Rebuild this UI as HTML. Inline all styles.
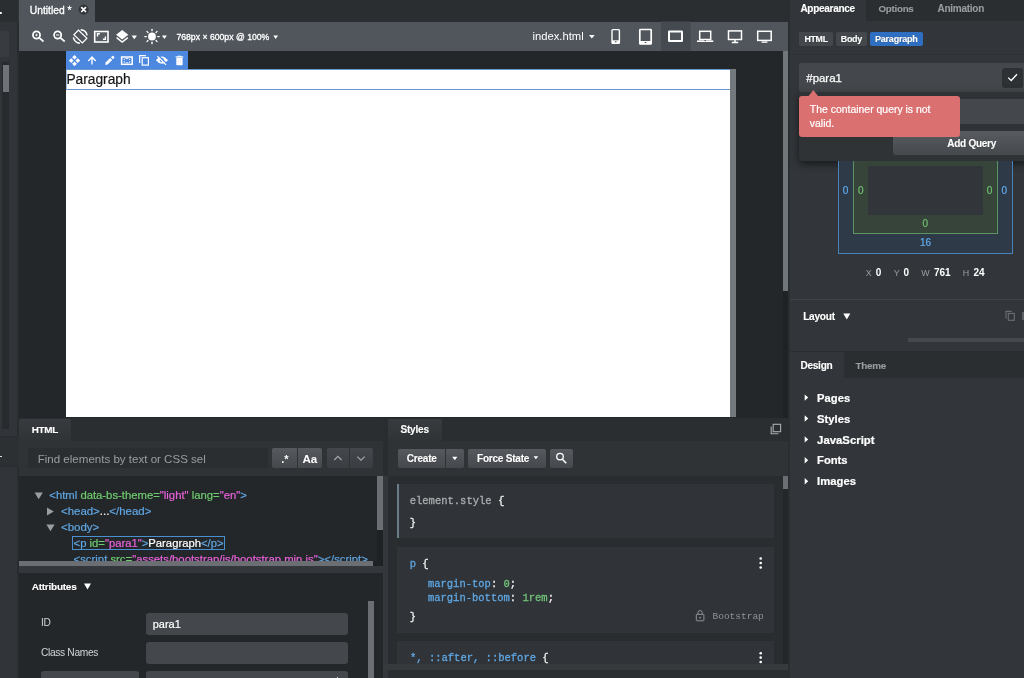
<!DOCTYPE html>
<html lang="en">
<head>
<meta charset="utf-8">
<title>Bootstrap Studio</title>
<style>
*{box-sizing:border-box;margin:0;padding:0}
html,body{width:1024px;height:678px;overflow:hidden;background:#34383c;font-family:"Liberation Sans",sans-serif;color:#fff}
#app{position:relative;width:1024px;height:678px;overflow:hidden;background:#34383c;will-change:transform}
.abs{position:absolute}
.t{position:absolute;white-space:pre;line-height:1}
svg{position:absolute;overflow:visible;pointer-events:none}
.btn{position:absolute;background:linear-gradient(#565a5e,#45494d);border-radius:2px}
.inp{position:absolute;background:#44484c;border-radius:3px}
</style>
</head>
<body>
<div id="app">
<!-- LEFT STRIP -->
<div class="abs" style="left:0.00px;top:0.00px;width:19.00px;height:678.00px;background:#313539;"></div>
<div class="abs" style="left:0.00px;top:0.00px;width:17.50px;height:21.50px;background:#2b2e31;"></div>
<div class="abs" style="left:16.80px;top:21.50px;width:2.20px;height:656.50px;background:#292c2f;"></div>
<div class="abs" style="left:0.00px;top:11.80px;width:1.60px;height:2.20px;background:#fff;border-radius:0 1px 1px 0"></div>
<div class="abs" style="left:0.00px;top:30.50px;width:8.50px;height:26.00px;background:#383c40;border-radius:0 2px 2px 0"></div>
<div class="abs" style="left:2.30px;top:62.00px;width:6.90px;height:367.00px;background:#282b2e;"></div>
<div class="abs" style="left:3.30px;top:65.30px;width:5.50px;height:26.70px;background:#6f7377;"></div>
<div class="abs" style="left:0.00px;top:436.00px;width:19.00px;height:2.00px;background:#2b2e31;"></div>
<div class="abs" style="left:0.00px;top:438.00px;width:19.00px;height:27.00px;background:#2d3033;"></div>
<div class="abs" style="left:0.00px;top:455.50px;width:1.50px;height:1.30px;background:#ddd;"></div>
<div class="abs" style="left:0.00px;top:465.00px;width:19.00px;height:1.50px;background:#2b2e31;"></div>
<!-- TOP BAR, DOC TAB, TOOLBAR, CANVAS -->
<div class="abs" style="left:19.00px;top:0.00px;width:771.00px;height:21.50px;background:#2b2e31;"></div>
<div class="abs" style="left:19.00px;top:0.00px;width:76.00px;height:22.00px;background:#50565c;"></div>
<div class="abs" style="left:19.00px;top:21.50px;width:769.20px;height:29.60px;background:#50565c;"></div>
<div class="abs" style="left:788.20px;top:0.00px;width:1.80px;height:678.00px;background:#2b2e31;"></div>
<div class="abs" style="left:19.00px;top:51.10px;width:764.00px;height:367.40px;background:#24272a;"></div>
<div class="abs" style="left:782.80px;top:51.10px;width:5.40px;height:240.00px;background:#70767a;"></div>
<div class="abs" style="left:782.80px;top:291.00px;width:5.40px;height:127.50px;background:#1f2224;"></div>
<div class="abs" style="left:66.00px;top:69.00px;width:664.00px;height:348.30px;background:#fff;"></div>
<div class="abs" style="left:730.00px;top:69.00px;width:6.00px;height:348.30px;background:#74797d;"></div>
<div class="t" style="left:29.80px;top:6px;font-size:10.30px;color:#fff;-webkit-text-stroke:.3px #fff;">Untitled *</div>
<svg style="left:77.50px;top:4.20px;" width="11.2" height="11.2" viewBox="0 0 11.2 11.2"><circle cx="5.6" cy="5.6" r="5.1" fill="#33373b"/><path d="M3.7 3.7L7.5 7.5M7.5 3.7L3.7 7.5" stroke="#fff" stroke-width="1.7" stroke-linecap="round"/></svg>
<svg style="left:0;top:0" width="1024" height="678"><circle cx="36.5" cy="35" r="3.55" fill="none" stroke="#fff" stroke-width="1.75"/><path d="M39.3 37.9L43.5 41.5" stroke="#fff" stroke-width="1.7"/><path d="M35.2 35H37.8M36.5 33.7V36.3" stroke="#e4e5e6" stroke-width="1.1"/><circle cx="57.65" cy="35" r="3.55" fill="none" stroke="#fff" stroke-width="1.75"/><path d="M60.45 37.9L64.7 41.5" stroke="#fff" stroke-width="1.7"/><path d="M56 35H59.3" stroke="#dcdddf" stroke-width="1.3"/><g transform="translate(80.4 36.5) rotate(44)"><rect x="-5.85" y="-3.27" width="11.7" height="6.54" fill="none" stroke="#fff" stroke-width="1.2"/></g><path d="M80.6 29.7A6.9 6.9 0 0 1 87.1 35.3" fill="none" stroke="#fff" stroke-width="1.5"/><path d="M79.9 43.3A6.9 6.9 0 0 1 73.4 37.4" fill="none" stroke="#fff" stroke-width="1.5"/><rect x="94.7" y="31.5" width="13.3" height="10.5" fill="#575d62" stroke="#fff" stroke-width="1.6"/><path d="M97.5 36.5V33.8H99.9" fill="none" stroke="#fff" stroke-width="1.4"/><path d="M105.4 36.6V39.3H102.9" fill="none" stroke="#fff" stroke-width="1.4"/><path d="M122.2 29.9L128.3 34.8L122.2 39.5L116.1 34.8Z" fill="#fff"/><path d="M116.6 37.6L122.2 42L127.8 37.6" fill="none" stroke="#fff" stroke-width="1.4"/><path d="M131.6 35.5H137L134.3 39.2Z" fill="#fff"/><circle cx="152" cy="36.5" r="3.9" fill="#fff"/><path d="M157.70 36.50L159.20 36.50" stroke="#fff" stroke-width="1.25" stroke-linecap="round"/><path d="M156.03 40.53L157.09 41.59" stroke="#fff" stroke-width="1.25" stroke-linecap="round"/><path d="M152.00 42.20L152.00 43.70" stroke="#fff" stroke-width="1.25" stroke-linecap="round"/><path d="M147.97 40.53L146.91 41.59" stroke="#fff" stroke-width="1.25" stroke-linecap="round"/><path d="M146.30 36.50L144.80 36.50" stroke="#fff" stroke-width="1.25" stroke-linecap="round"/><path d="M147.97 32.47L146.91 31.41" stroke="#fff" stroke-width="1.25" stroke-linecap="round"/><path d="M152.00 30.80L152.00 29.30" stroke="#fff" stroke-width="1.25" stroke-linecap="round"/><path d="M156.03 32.47L157.09 31.41" stroke="#fff" stroke-width="1.25" stroke-linecap="round"/><path d="M161.9 35.6H166.9L164.4 39Z" fill="#fff"/><path d="M273.3 35.6H278.1L275.7 39Z" fill="#fff"/><path d="M589 34.9H594.7L591.85 38.5Z" fill="#fff"/><rect x="612" y="29.6" width="7.4" height="13.7" rx="0.8" fill="none" stroke="#fff" stroke-width="1.4"/><rect x="612" y="40.3" width="7.4" height="3" fill="#fff"/><rect x="614.9" y="41.2" width="1.6" height="1.1" fill="#50565c"/><rect x="639.8" y="29.5" width="11.4" height="14.5" rx="0.6" fill="none" stroke="#fff" stroke-width="1.7"/><rect x="639.7" y="41" width="11.6" height="3.1" fill="#fff"/><rect x="644.7" y="41.9" width="1.6" height="1.1" fill="#50565c"/><rect x="661" y="21.5" width="29.6" height="29.6" fill="#444a4f"/><rect x="669" y="31.6" width="13" height="9.4" rx="0.3" fill="#50565c" stroke="#fff" stroke-width="2"/><rect x="699.7" y="31.3" width="11" height="8.2" fill="none" stroke="#fff" stroke-width="1.5"/><path d="M697 41.2H713.3" stroke="#fff" stroke-width="1.6"/><rect x="704.4" y="40.1" width="1.6" height="1" fill="#50565c"/><rect x="728.5" y="30.9" width="13" height="8.6" fill="none" stroke="#fff" stroke-width="1.5"/><path d="M735 40V42M731.8 42.4H738.2" stroke="#fff" stroke-width="1.5"/><rect x="757.7" y="31.3" width="13.5" height="9.1" fill="none" stroke="#fff" stroke-width="1.5"/><path d="M761.6 42.1H767.4" stroke="#fff" stroke-width="1.4"/></svg>
<div class="t" style="left:176.40px;top:33px;font-size:8.69px;color:#fff;-webkit-text-stroke:.3px #fff;">768px × 600px @ 100%</div>
<div class="t" style="left:532.50px;top:31px;font-size:11.24px;color:#fff;">index.html</div>
<div class="abs" style="left:66.00px;top:51.30px;width:122.00px;height:18.10px;background:#4d88e0;"></div>
<div class="abs" style="left:66.00px;top:69.00px;width:664.00px;height:20.50px;background:transparent;border:1px solid #6a97cf;border-right:none;border-left-color:#a9c3e6;"></div>
<div class="t" style="left:66.40px;top:73px;font-size:13.77px;color:#15181b;-webkit-text-stroke:.2px #15181b;">Paragraph</div>
<svg style="left:0;top:0" width="1024" height="678"><path d="M74.50 54.90L76.85 57.25L74.50 59.60L72.15 57.25ZM74.50 61.50L76.85 63.85L74.50 66.20L72.15 63.85ZM71.20 58.20L73.55 60.55L71.20 62.90L68.85 60.55ZM77.80 58.20L80.15 60.55L77.80 62.90L75.45 60.55Z" fill="#fff"/><path d="M92 64.6V57.4M88.3 60.9L92 57.1L95.7 60.9" fill="none" stroke="#fff" stroke-width="1.4"/><path d="M105.2 65L105.6 62.6L110.2 58.1L112.2 60.1L107.6 64.6Z" fill="#fff"/><path d="M111 57.3L112.2 56.1Q112.9 55.6 113.5 56.2L114.1 56.8Q114.7 57.5 114.2 58.1L113 59.3Z" fill="#fff"/><rect x="121.6" y="57" width="10.6" height="7.3" fill="none" stroke="#fff" stroke-width="1.5"/><path d="M124.3 58.7v1.4M124.3 61.3v1.4M129.6 58.7v1.4M129.6 61.3v1.4M125.6 58.6h2.8M125.6 62.8h2.8" stroke="#fff" stroke-width="0.9"/><rect x="142.2" y="57.7" width="6.2" height="7.4" fill="none" stroke="#fff" stroke-width="1.2"/><path d="M139.7 63V55.6H146" fill="none" stroke="#fff" stroke-width="1.2"/><path d="M155.9 60.2Q161.9 52.6 168 60.2Q161.9 67.4 155.9 60.2Z" fill="#fff"/><circle cx="161.9" cy="60.2" r="2.1" fill="#4d88e0"/><circle cx="161.9" cy="60.2" r="0.9" fill="#fff"/><path d="M158.4 55.4L167.2 64.2" stroke="#4d88e0" stroke-width="1.3"/><path d="M157.3 56.2L166 64.9" stroke="#fff" stroke-width="1.2"/><rect x="176.3" y="57.9" width="6.3" height="7.4" rx="0.7" fill="#fff"/><rect x="175.6" y="56.3" width="7.6" height="1.3" fill="#fff"/><rect x="177.9" y="55.7" width="3" height="1" fill="#fff"/><path d="M178.3 59.3V63.8M180.6 59.3V63.8" stroke="#e8e0f0" stroke-width="0.5"/></svg>
<!-- BOTTOM: HTML PANEL -->
<div class="abs" style="left:19.00px;top:418.40px;width:769.20px;height:57.60px;background:#2f3336;"></div>
<div class="abs" style="left:383.00px;top:418.40px;width:5.00px;height:57.60px;background:#2a2d30;"></div>
<div class="abs" style="left:19.00px;top:418.40px;width:364.00px;height:22.80px;background:#2b2e31;"></div>
<div class="abs" style="left:19.00px;top:418.80px;width:52.40px;height:22.40px;background:linear-gradient(#383c40,#2f3336);border-radius:2px 2px 0 0"></div>
<div class="t" style="left:31.80px;top:425px;font-size:9.91px;color:#fff;font-weight:bold;letter-spacing:-0.328px;-webkit-text-stroke:.15px currentColor;text-shadow:0 0 1px rgba(0,0,0,.5);">HTML</div>
<div class="abs" style="left:28.00px;top:448.20px;width:239.60px;height:19.80px;background:#2b2e31;border-radius:2px"></div>
<div class="t" style="left:37.70px;top:454px;font-size:11.56px;color:#9b9ea1;">Find elements by text or CSS sel</div>
<div class="abs" style="left:271.60px;top:448.30px;width:25.60px;height:19.60px;background:linear-gradient(#565a5e,#45494d);border-radius:2px 0 0 2px"></div>
<div class="abs" style="left:297.70px;top:448.30px;width:24.30px;height:19.60px;background:linear-gradient(#565a5e,#45494d);border-radius:0 2px 2px 0"></div>
<div class="abs" style="left:326.50px;top:448.30px;width:22.60px;height:19.60px;background:linear-gradient(#44484c,#3a3e42);border-radius:2px 0 0 2px"></div>
<div class="abs" style="left:349.60px;top:448.30px;width:23.00px;height:19.60px;background:linear-gradient(#44484c,#3a3e42);border-radius:0 2px 2px 0"></div>
<div class="t" style="left:281.20px;top:454px;font-size:11.00px;color:#fff;font-weight:bold;">.*</div>
<div class="t" style="left:302.40px;top:454px;font-size:11.58px;color:#fff;font-weight:bold;">Aa</div>
<svg style="left:0;top:0" width="1024" height="678"><path d="M334.2 460L337.9 456.4L341.6 460" fill="none" stroke="#a4a7aa" stroke-width="1.2"/><path d="M357.3 456.6L361 460.2L364.7 456.6" fill="none" stroke="#a4a7aa" stroke-width="1.2"/></svg>
<div class="abs" style="left:19.00px;top:476.00px;width:364.00px;height:90.00px;background:#24272a;"></div>
<svg style="left:0;top:0" width="1024" height="678"><path d="M34.60 492.40L42.80 492.40L38.70 499.20Z" fill="#9b9ea1"/></svg>
<div class="t" style="left:49.30px;top:490px;font-size:11.30px;color:#fff;-webkit-text-stroke:.2px currentColor;"><span style="color:#5fa6e2">&lt;html </span><span style="color:#70cc70">data-bs-theme=</span><span style="color:#ea62dc">"light"</span><span style="color:#70cc70"> lang=</span><span style="color:#ea62dc">"en"</span><span style="color:#5fa6e2">&gt;</span></div>
<svg style="left:0;top:0" width="1024" height="678"><path d="M47.00 507.60L53.80 511.60L47.00 515.60Z" fill="#9b9ea1"/></svg>
<div class="t" style="left:61.00px;top:506px;font-size:11.45px;color:#fff;-webkit-text-stroke:.2px currentColor;"><span style="color:#5fa6e2">&lt;head&gt;</span><span style="color:#f0f0f0">...</span><span style="color:#5fa6e2">&lt;/head&gt;</span></div>
<svg style="left:0;top:0" width="1024" height="678"><path d="M46.40 524.40L54.60 524.40L50.50 531.20Z" fill="#9b9ea1"/></svg>
<div class="t" style="left:61.00px;top:522px;font-size:11.45px;color:#fff;-webkit-text-stroke:.2px currentColor;"><span style="color:#5fa6e2">&lt;body&gt;</span></div>
<div class="abs" style="left:72.00px;top:536.40px;width:153.00px;height:13.80px;background:transparent;border:1px solid #4a8fd0;"></div>
<div class="t" style="left:73.60px;top:538px;font-size:11.28px;color:#fff;-webkit-text-stroke:.2px currentColor;"><span style="color:#5fa6e2">&lt;p </span><span style="color:#70cc70">id=</span><span style="color:#ea62dc">"para1"</span><span style="color:#5fa6e2">&gt;</span><span style="color:#fff">Paragraph</span><span style="color:#5fa6e2">&lt;/p&gt;</span></div>
<div class="t" style="left:73.60px;top:554px;font-size:11.34px;color:#fff;-webkit-text-stroke:.2px currentColor;"><span style="color:#5fa6e2">&lt;script </span><span style="color:#70cc70">src=</span><span style="color:#ea62dc">"assets/bootstrap/js/bootstrap.min.js"</span><span style="color:#5fa6e2">&gt;&lt;/script&gt;</span></div>
<div class="abs" style="left:19.00px;top:561.00px;width:354.00px;height:5.20px;background:#6b6f73;"></div>
<div class="abs" style="left:373.00px;top:561.00px;width:10.00px;height:5.20px;background:#1f2224;"></div>
<div class="abs" style="left:376.80px;top:476.00px;width:5.80px;height:85.00px;background:#1f2224;"></div>
<div class="abs" style="left:376.80px;top:476.00px;width:5.80px;height:53.80px;background:#6b6f73;"></div>
<!-- ATTRIBUTES PANEL -->
<div class="abs" style="left:19.00px;top:573.00px;width:364.00px;height:105.00px;background:#24272a;"></div>
<div class="t" style="left:31.70px;top:582px;font-size:9.98px;color:#fff;font-weight:bold;letter-spacing:-0.225px;-webkit-text-stroke:.15px currentColor;text-shadow:0 0 1px rgba(0,0,0,.5);">Attributes</div>
<svg style="left:0;top:0" width="1024" height="678"><path d="M84.00 583.50L91.00 583.50L87.50 589.50Z" fill="#fff"/></svg>
<div class="t" style="left:41.00px;top:618px;font-size:10.20px;color:#d2d4d6;letter-spacing:-0.450px;">ID</div>
<div class="t" style="left:41.00px;top:648px;font-size:10.20px;color:#d2d4d6;letter-spacing:-0.323px;">Class Names</div>
<div class="abs" style="left:146.00px;top:613.30px;width:202.00px;height:21.60px;background:#44484c;border-radius:3px"></div>
<div class="abs" style="left:146.00px;top:642.00px;width:202.00px;height:21.60px;background:#44484c;border-radius:3px"></div>
<div class="abs" style="left:41.00px;top:671.40px;width:97.50px;height:12.00px;background:#44484c;border-radius:3px"></div>
<div class="abs" style="left:146.00px;top:671.40px;width:202.00px;height:12.00px;background:#44484c;border-radius:3px"></div>
<div class="t" style="left:152.80px;top:619px;font-size:10.91px;color:#fff;-webkit-text-stroke:.2px #fff;">para1</div>
<div class="abs" style="left:368.40px;top:600.70px;width:5.40px;height:80.00px;background:#6b6f73;"></div>
<div class="abs" style="left:337.20px;top:676.60px;width:1.00px;height:1.40px;background:#ddd;"></div>
<!-- STYLES PANEL -->
<div class="abs" style="left:388.00px;top:418.40px;width:400.20px;height:22.80px;background:#2b2e31;"></div>
<div class="abs" style="left:388.00px;top:418.80px;width:54.10px;height:22.40px;background:linear-gradient(#383c40,#2f3336);border-radius:2px 2px 0 0"></div>
<div class="t" style="left:400.50px;top:425px;font-size:10.09px;color:#fff;font-weight:bold;letter-spacing:-0.236px;-webkit-text-stroke:.15px currentColor;text-shadow:0 0 1px rgba(0,0,0,.5);">Styles</div>
<svg style="left:0;top:0" width="1024" height="678"><rect x="773.2" y="424.3" width="7.4" height="7.4" fill="none" stroke="#a9acaf" stroke-width="1.1"/><path d="M771.2 426.6V433.8H778.4" fill="none" stroke="#a9acaf" stroke-width="1.1"/></svg>
<div class="abs" style="left:398.00px;top:448.50px;width:47.00px;height:19.50px;background:linear-gradient(#565a5e,#45494d);border-radius:2px 0 0 2px"></div>
<div class="abs" style="left:445.60px;top:448.50px;width:18.40px;height:19.50px;background:linear-gradient(#565a5e,#45494d);border-radius:0 2px 2px 0"></div>
<div class="abs" style="left:467.90px;top:448.50px;width:77.70px;height:19.50px;background:linear-gradient(#565a5e,#45494d);border-radius:2px"></div>
<div class="abs" style="left:550.00px;top:448.50px;width:23.00px;height:19.50px;background:linear-gradient(#565a5e,#45494d);border-radius:2px"></div>
<div class="t" style="left:406.80px;top:454px;font-size:10.05px;color:#fff;font-weight:bold;letter-spacing:-0.248px;-webkit-text-stroke:.15px currentColor;text-shadow:0 0 1px rgba(0,0,0,.5);">Create</div>
<div class="t" style="left:477.00px;top:454px;font-size:10.06px;color:#fff;font-weight:bold;letter-spacing:-0.237px;-webkit-text-stroke:.15px currentColor;text-shadow:0 0 1px rgba(0,0,0,.5);">Force State</div>
<svg style="left:0;top:0" width="1024" height="678"><path d="M452.2 456.8H457.4L454.8 460.2Z" fill="#fff"/><path d="M533.6 456.3H538.2L535.9 459.3Z" fill="#fff"/><circle cx="560" cy="456.6" r="3.3" fill="none" stroke="#fff" stroke-width="1.3"/><path d="M562.4 459.2L566.2 463.2" stroke="#fff" stroke-width="1.5"/></svg>
<div class="abs" style="left:388.00px;top:476.00px;width:395.00px;height:188.00px;background:#2a2d30;"></div>
<div class="abs" style="left:783.00px;top:476.00px;width:5.20px;height:188.00px;background:#24272a;"></div>
<div class="abs" style="left:783.00px;top:475.70px;width:5.20px;height:13.80px;background:#6b6f73;"></div>
<div class="abs" style="left:397.20px;top:483.80px;width:377.00px;height:54.30px;background:#303337;border-left:2px solid #6c7d8a;"></div>
<div class="abs" style="left:397.20px;top:546.60px;width:377.00px;height:86.00px;background:#303337;"></div>
<div class="abs" style="left:397.20px;top:641.20px;width:377.00px;height:22.80px;background:#303337;"></div>
<div class="t" style="left:409.70px;top:496px;font-size:10.50px;color:#fff;font-family:'Liberation Mono',monospace;-webkit-text-stroke:.3px currentColor;"><span style="color:#a9acaf">element.style </span><span style="color:#eeeeee">{</span></div>
<div class="t" style="left:409.70px;top:518px;font-size:10.50px;color:#fff;font-family:'Liberation Mono',monospace;-webkit-text-stroke:.3px currentColor;"><span style="color:#eeeeee">}</span></div>
<div class="t" style="left:409.70px;top:559px;font-size:10.50px;color:#fff;font-family:'Liberation Mono',monospace;-webkit-text-stroke:.3px currentColor;"><span style="color:#5fa6e2">p </span><span style="color:#eeeeee">{</span></div>
<div class="t" style="left:427.90px;top:579px;font-size:10.50px;color:#fff;font-family:'Liberation Mono',monospace;-webkit-text-stroke:.3px currentColor;"><span style="color:#5fa6e2">margin-top</span><span style="color:#eeeeee">: </span><span style="color:#72c47a">0</span><span style="color:#eeeeee">;</span></div>
<div class="t" style="left:427.90px;top:593px;font-size:10.50px;color:#fff;font-family:'Liberation Mono',monospace;-webkit-text-stroke:.3px currentColor;"><span style="color:#5fa6e2">margin-bottom</span><span style="color:#eeeeee">: </span><span style="color:#72c47a">1rem</span><span style="color:#eeeeee">;</span></div>
<div class="t" style="left:409.70px;top:612px;font-size:10.50px;color:#fff;font-family:'Liberation Mono',monospace;-webkit-text-stroke:.3px currentColor;"><span style="color:#eeeeee">}</span></div>
<div class="t" style="left:410.00px;top:653px;font-size:10.50px;color:#fff;font-family:'Liberation Mono',monospace;-webkit-text-stroke:.3px currentColor;"><span style="color:#5fa6e2">*, ::after, ::before </span><span style="color:#eeeeee">{</span></div>
<div class="t" style="left:712.50px;top:612px;font-size:9.50px;color:#8f9295;font-family:'Liberation Mono',monospace;">Bootstrap</div>
<svg style="left:0;top:0" width="1024" height="678"><circle cx="760.7" cy="558.5" r="1.3" fill="#fff"/><circle cx="760.7" cy="563" r="1.3" fill="#fff"/><circle cx="760.7" cy="567.5" r="1.3" fill="#fff"/><circle cx="760.7" cy="653.2" r="1.3" fill="#fff"/><circle cx="760.7" cy="657.6" r="1.3" fill="#fff"/><circle cx="760.7" cy="662" r="1.3" fill="#fff"/><rect x="696.3" y="614.3" width="7.6" height="6.5" rx="0.6" fill="none" stroke="#8f9295" stroke-width="1"/><path d="M698 614.2V612.6A2.1 2.1 0 0 1 702.2 612.6V614.2" fill="none" stroke="#8f9295" stroke-width="1"/><rect x="699.4" y="616.9" width="1.5" height="1.5" fill="#8f9295"/></svg>
<div class="abs" style="left:383.00px;top:664.00px;width:405.20px;height:6.40px;background:#363a3d;"></div>
<div class="abs" style="left:388.00px;top:670.40px;width:400.20px;height:8.00px;background:#2b2e31;"></div>
<!-- RIGHT PANEL -->
<div class="abs" style="left:790.00px;top:0.00px;width:234.00px;height:678.00px;background:#32363a;"></div>
<div class="abs" style="left:790.00px;top:0.00px;width:234.00px;height:21.30px;background:#2b2e31;"></div>
<div class="abs" style="left:790.00px;top:0.00px;width:76.40px;height:21.60px;background:#32363a;"></div>
<div class="t" style="left:800.40px;top:4px;font-size:10.01px;color:#fff;font-weight:bold;letter-spacing:-0.273px;-webkit-text-stroke:.15px currentColor;text-shadow:0 0 1px rgba(0,0,0,.5);">Appearance</div>
<div class="t" style="left:878.40px;top:4px;font-size:9.78px;color:#9b9ea1;font-weight:bold;letter-spacing:-0.251px;-webkit-text-stroke:.15px currentColor;text-shadow:0 0 1px rgba(0,0,0,.5);">Options</div>
<div class="t" style="left:937.50px;top:4px;font-size:9.99px;color:#9b9ea1;font-weight:bold;letter-spacing:-0.258px;-webkit-text-stroke:.15px currentColor;text-shadow:0 0 1px rgba(0,0,0,.5);">Animation</div>
<div class="abs" style="left:799.20px;top:32.10px;width:34.00px;height:13.80px;background:#44484c;border-radius:1.5px"></div>
<div class="abs" style="left:836.00px;top:32.10px;width:31.20px;height:13.80px;background:#44484c;border-radius:2px"></div>
<div class="abs" style="left:869.50px;top:32.10px;width:53.20px;height:13.80px;background:#2e6fc2;border-radius:2px"></div>
<div class="t" style="left:804.40px;top:35px;font-size:8.85px;color:#fff;font-weight:bold;letter-spacing:-0.293px;-webkit-text-stroke:.15px currentColor;text-shadow:0 0 1px rgba(0,0,0,.5);">HTML</div>
<div class="t" style="left:840.70px;top:35px;font-size:8.95px;color:#fff;font-weight:bold;letter-spacing:-0.266px;-webkit-text-stroke:.15px currentColor;text-shadow:0 0 1px rgba(0,0,0,.5);">Body</div>
<div class="t" style="left:875.00px;top:35px;font-size:9.04px;color:#fff;font-weight:bold;letter-spacing:-0.237px;-webkit-text-stroke:.15px currentColor;text-shadow:0 0 1px rgba(0,0,0,.5);">Paragraph</div>
<div class="abs" style="left:790.00px;top:54.30px;width:234.00px;height:0.80px;background:#2e3134;"></div>
<div class="abs" style="left:799.20px;top:63.30px;width:230.00px;height:28.50px;background:#44484c;border-radius:3px"></div>
<div class="t" style="left:806.30px;top:73px;font-size:11.43px;color:#fff;-webkit-text-stroke:.25px #fff;">#para1</div>
<div class="abs" style="left:1001.50px;top:68.00px;width:21.30px;height:20.00px;background:#2e3134;border-radius:3px"></div>
<svg style="left:0;top:0" width="1024" height="678"><path d="M1008.2 77.6L1011.2 80.5L1017 74.2" fill="none" stroke="#fff" stroke-width="1.3"/></svg>
<div class="abs" style="left:799.20px;top:91.80px;width:230.00px;height:69.40px;background:#303336;border-radius:0 0 0 4px;box-shadow:0 3px 9px rgba(0,0,0,.55)"></div>
<div class="abs" style="left:940.00px;top:99.20px;width:90.00px;height:25.30px;background:#44484c;border-radius:3px"></div>
<div class="abs" style="left:893.00px;top:131.00px;width:136.00px;height:24.00px;background:linear-gradient(#585c60,#45494d);border-radius:3px"></div>
<div class="t" style="left:947.30px;top:139px;font-size:10.00px;color:#fff;font-weight:bold;letter-spacing:-0.271px;-webkit-text-stroke:.15px currentColor;text-shadow:0 0 1px rgba(0,0,0,.5);">Add Query</div>
<div class="abs" style="left:799.00px;top:95.50px;width:161.20px;height:41.50px;background:#db7070;border-radius:3px"></div>
<svg style="left:0;top:0" width="1024" height="678"><path d="M808.6 96L813.3 90L818 96Z" fill="#db7070"/></svg>
<div class="t" style="left:809.80px;top:105px;font-size:10.44px;color:#fff;-webkit-text-stroke:.2px #fff;">The container query is not</div>
<div class="t" style="left:809.80px;top:119px;font-size:10.44px;color:#fff;-webkit-text-stroke:.2px #fff;">valid.</div>
<div class="abs" style="left:837.90px;top:161.20px;width:175.10px;height:92.40px;background:#2e3a48;border:1px solid #4a80b8;border-top:none"></div>
<div class="abs" style="left:852.70px;top:161.20px;width:145.00px;height:73.20px;background:#36443a;border:1px solid #5a9462;border-top:none"></div>
<div class="abs" style="left:868.40px;top:166.20px;width:114.80px;height:48.70px;background:#32363a;"></div>
<div class="t" style="left:825.60px;top:186px;width:40px;text-align:center;font-size:10.00px;color:#62aaee;-webkit-text-stroke:.2px #62aaee;">0</div>
<div class="t" style="left:840.90px;top:186px;width:40px;text-align:center;font-size:10.00px;color:#72c272;-webkit-text-stroke:.2px #72c272;">0</div>
<div class="t" style="left:969.50px;top:186px;width:40px;text-align:center;font-size:10.00px;color:#72c272;-webkit-text-stroke:.2px #72c272;">0</div>
<div class="t" style="left:984.30px;top:186px;width:40px;text-align:center;font-size:10.00px;color:#62aaee;-webkit-text-stroke:.2px #62aaee;">0</div>
<div class="t" style="left:905.30px;top:219px;width:40px;text-align:center;font-size:10.00px;color:#72c272;-webkit-text-stroke:.2px #72c272;">0</div>
<div class="t" style="left:905.60px;top:238px;width:40px;text-align:center;font-size:10.00px;color:#62aaee;-webkit-text-stroke:.2px #62aaee;">16</div>
<div class="t" style="left:865.80px;top:269px;font-size:8.90px;color:#9b9ea1;">X</div>
<div class="t" style="left:875.70px;top:268px;font-size:10.00px;color:#fff;font-weight:bold;">0</div>
<div class="t" style="left:893.80px;top:269px;font-size:8.90px;color:#9b9ea1;">Y</div>
<div class="t" style="left:903.40px;top:268px;font-size:10.00px;color:#fff;font-weight:bold;">0</div>
<div class="t" style="left:921.20px;top:269px;font-size:8.90px;color:#9b9ea1;">W</div>
<div class="t" style="left:934.00px;top:268px;font-size:10.00px;color:#fff;font-weight:bold;">761</div>
<div class="t" style="left:962.80px;top:269px;font-size:8.90px;color:#9b9ea1;">H</div>
<div class="t" style="left:973.50px;top:268px;font-size:10.00px;color:#fff;font-weight:bold;">24</div>
<div class="abs" style="left:790.00px;top:299.00px;width:234.00px;height:1.00px;background:#3e4246;"></div>
<div class="t" style="left:803.20px;top:312px;font-size:10.15px;color:#fff;font-weight:bold;letter-spacing:-0.264px;-webkit-text-stroke:.15px currentColor;text-shadow:0 0 1px rgba(0,0,0,.5);">Layout</div>
<svg style="left:0;top:0" width="1024" height="678"><path d="M843.30 313.60L850.30 313.60L846.80 319.60Z" fill="#fff"/></svg>
<svg style="left:0;top:0" width="1024" height="678"><rect x="1008.3" y="313.4" width="6" height="6.9" fill="none" stroke="#6b6f73" stroke-width="1.1"/><path d="M1006 318.4V311.4H1011.6" fill="none" stroke="#6b6f73" stroke-width="1.1"/><rect x="1021.9" y="312" width="4" height="8" fill="#5d6165"/></svg>
<div class="abs" style="left:908.20px;top:338.30px;width:120.00px;height:4.20px;background:#45494d;"></div>
<div class="abs" style="left:790.00px;top:351.40px;width:234.00px;height:26.20px;background:#2b2e31;"></div>
<div class="abs" style="left:790.00px;top:352.00px;width:53.80px;height:25.60px;background:#32363a;"></div>
<div class="t" style="left:800.40px;top:361px;font-size:10.11px;color:#fff;font-weight:bold;letter-spacing:-0.268px;-webkit-text-stroke:.15px currentColor;text-shadow:0 0 1px rgba(0,0,0,.5);">Design</div>
<div class="t" style="left:855.50px;top:361px;font-size:9.94px;color:#9b9ea1;font-weight:bold;letter-spacing:-0.305px;-webkit-text-stroke:.15px currentColor;text-shadow:0 0 1px rgba(0,0,0,.5);">Theme</div>
<svg style="left:0;top:0" width="1024" height="678"><path d="M804.70 394.40L808.20 397.60L804.70 400.80Z" fill="#fff"/></svg>
<div class="t" style="left:817.10px;top:393px;font-size:11.23px;color:#fff;font-weight:bold;-webkit-text-stroke:.2px #fff;">Pages</div>
<svg style="left:0;top:0" width="1024" height="678"><path d="M804.70 415.30L808.20 418.50L804.70 421.70Z" fill="#fff"/></svg>
<div class="t" style="left:817.10px;top:414px;font-size:11.27px;color:#fff;font-weight:bold;-webkit-text-stroke:.2px #fff;">Styles</div>
<svg style="left:0;top:0" width="1024" height="678"><path d="M804.70 436.20L808.20 439.40L804.70 442.60Z" fill="#fff"/></svg>
<div class="t" style="left:817.10px;top:435px;font-size:11.37px;color:#fff;font-weight:bold;-webkit-text-stroke:.2px #fff;">JavaScript</div>
<svg style="left:0;top:0" width="1024" height="678"><path d="M804.70 457.10L808.20 460.30L804.70 463.50Z" fill="#fff"/></svg>
<div class="t" style="left:817.10px;top:455px;font-size:11.21px;color:#fff;font-weight:bold;-webkit-text-stroke:.2px #fff;">Fonts</div>
<svg style="left:0;top:0" width="1024" height="678"><path d="M804.70 478.00L808.20 481.20L804.70 484.40Z" fill="#fff"/></svg>
<div class="t" style="left:817.10px;top:476px;font-size:11.29px;color:#fff;font-weight:bold;-webkit-text-stroke:.2px #fff;">Images</div>
</div>
</body>
</html>
